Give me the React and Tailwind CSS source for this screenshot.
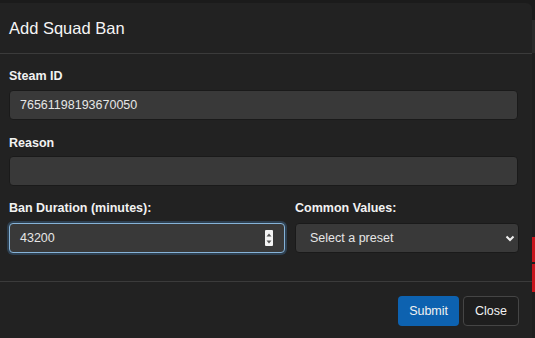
import React from "react"

const font = { fontFamily: '"Liberation Sans", Arial, sans-serif' }

const Label = ({ children }) => (
  <div className="text-[12.5px] font-bold text-[#f2f2f2] leading-[15px]">{children}</div>
)

const Spinner = () => (
  <div className="w-[8px] h-[16px] bg-[#f4f4f4] rounded-[1px] flex flex-col items-center justify-center gap-[3px]">
    <svg width="6" height="4" viewBox="0 0 6 4"><path d="M3 0.5L5.5 3.5H0.5Z" fill="#555" /></svg>
    <svg width="6" height="4" viewBox="0 0 6 4"><path d="M3 3.5L5.5 0.5H0.5Z" fill="#555" /></svg>
  </div>
)

export default function App() {
  return (
    <div className="w-[535px] h-[338px] bg-[#1b1b1b] flex overflow-hidden" style={font}>
      <div className="w-[532px] mt-[3px] bg-[#222222] rounded-tr-[6px] flex flex-col">
        {/* header */}
        <div className="h-[51px] flex items-center px-[9px] border-b border-[#3b3b3b]">
          <h2 className="text-[16.5px] text-[#f5f5f5] pt-[1px]">Add Squad Ban</h2>
        </div>

        {/* body */}
        <div className="px-[9px] pt-[15px] flex flex-col h-[228px] border-b border-[#3b3b3b]">
          <Label>Steam ID</Label>
          <div className="mt-[6px] w-[509px] h-[30px] bg-[#393939] border border-[#1a1a1a] rounded-[4px] flex items-center px-[10px] text-[12.5px] text-[#e6e6e6]">
            76561198193670050
          </div>

          <div className="mt-[16px]">
            <Label>Reason</Label>
          </div>
          <div className="mt-[5px] w-[509px] h-[30px] bg-[#393939] border border-[#1a1a1a] rounded-[4px]" />

          <div className="mt-[15px] flex gap-[10px]">
            <div className="flex flex-col w-[276px]">
              <Label>Ban Duration (minutes):</Label>
              <div className="mt-[7px] h-[30px] bg-[#393939] border border-[#86b3d8] rounded-[4px] shadow-[0_0_0_2px_rgba(70,120,170,0.35)] flex items-center justify-between pl-[10px] pr-[11px] text-[12.5px] text-[#e6e6e6]">
                <span>43200</span>
                <Spinner />
              </div>
            </div>
            <div className="flex flex-col w-[224px]">
              <Label>Common Values:</Label>
              <div className="mt-[7px] h-[30px] bg-[#393939] border border-[#1a1a1a] rounded-[4px] flex items-center justify-between pl-[14px] pr-[3px] text-[12.5px] text-[#e6e6e6]">
                <span>Select a preset</span>
                <svg width="10" height="7" viewBox="0 0 10 7">
                  <path d="M1.5 1.5L5 5L8.5 1.5" stroke="#f0f0f0" strokeWidth="2" fill="none" />
                </svg>
              </div>
            </div>
          </div>
        </div>

        {/* footer */}
        <div className="flex justify-end gap-[4px] pt-[14px] pr-[13px]">
          <button className="h-[30px] px-[11px] bg-[#0d62b0] rounded-[4px] text-[12.5px] text-[#f2f2f2]">
            Submit
          </button>
          <button className="h-[30px] px-[11px] bg-[#1e1e1e] border border-[#454545] rounded-[4px] text-[12.5px] text-[#f2f2f2]">
            Close
          </button>
        </div>
      </div>

      {/* page strip behind the dialog */}
      <div className="w-[3px] flex flex-col">
        <div className="h-[20px] bg-[#1b1b1b]" />
        <div className="h-[33px] bg-[#2a2a2a]" />
        <div className="h-[184px] bg-[#1e1e1e]" />
        <div className="h-[25px] bg-[#c8141c]" />
        <div className="h-[2px] bg-[#1e1e1e]" />
        <div className="h-[28px] bg-[#c8141c]" />
        <div className="flex-1 bg-[#1e1e1e]" />
      </div>
    </div>
  )
}
